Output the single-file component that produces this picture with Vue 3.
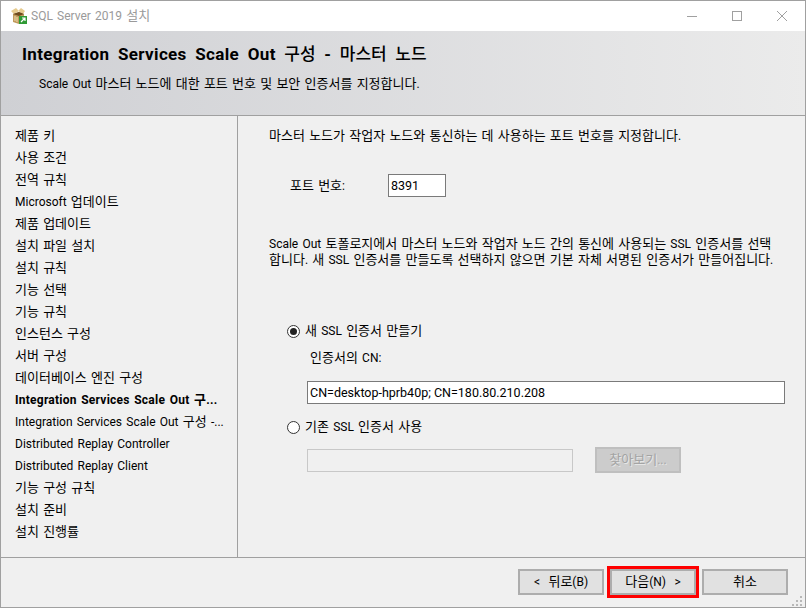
<script setup>
import { h } from 'vue'
const steps = ['제품 키','사용 조건','전역 규칙','Microsoft 업데이트','제품 업데이트','설치 파일 설치','설치 규칙','기능 선택','기능 규칙','인스턴스 구성','서버 구성','데이터베이스 엔진 구성','Integration Services Scale Out 구...','Integration Services Scale Out 구성 -...','Distributed Replay Controller','Distributed Replay Client','기능 구성 규칙','설치 준비','설치 진행률']
const T = (props) => props.t.split(/([가-힣]+)/).filter(Boolean).map((s) => /[가-힣]/.test(s) ? h('span', { class: 'ko' }, s) : s)
T.props = ['t']
</script>

<template>
  <div class="win">
    <div class="titlebar">
      <svg class="appicon" width="18" height="18" viewBox="0 0 18 18">
        <path d="M3 7 L9 5 L14 7 L14 15 L9 17 L3 15 Z" fill="#c09a5c"/>
        <path d="M1 4 L6 1 L9 4 L4 7 Z M15 4 L11 1 L8 4 L13 7 Z" fill="#e6cb8e"/>
        <path d="M3 7 L9 9 L14 7 L9 5 Z" fill="#6e4a1c"/>
        <path d="M5 9 L5 14 M7 10 L7 15" stroke="#f0dcb0" stroke-width="1"/>
        <rect x="9" y="9" width="8" height="8" fill="#2f9a35"/>
        <path d="M11 15 L15 11 M12 11 H15 V14" stroke="#fff" stroke-width="1.2" fill="none"/>
      </svg>
      <span class="wintitle"><T t="SQL Server 2019 설치" /></span>
      <div class="controls">
        <svg width="10" height="10" viewBox="0 0 10 10"><path d="M0 5.5H10" stroke="#a0a0a0"/></svg>
        <svg width="10" height="10" viewBox="0 0 10 10"><rect x=".5" y=".5" width="9" height="9" fill="none" stroke="#a0a0a0"/></svg>
        <svg width="10" height="10" viewBox="0 0 10 10"><path d="M0 0L10 10M10 0L0 10" stroke="#a0a0a0"/></svg>
      </div>
    </div>
    <header class="banner">
      <h1><T t="Integration Services Scale Out 구성 - 마스터 노드" /></h1>
      <p><T t="Scale Out 마스터 노드에 대한 포트 번호 및 보안 인증서를 지정합니다." /></p>
    </header>
    <div class="main">
      <nav class="side">
        <div v-for="(s,i) in steps" :key="s" class="step" :class="{cur:i===12}"><T :t="s" /></div>
      </nav>
      <section class="pane">
        <p class="intro"><T t="마스터 노드가 작업자 노드와 통신하는 데 사용하는 포트 번호를 지정합니다." /></p>
        <div class="port">
          <label><T t="포트 번호:" /></label>
          <div class="input portinput">8391</div>
        </div>
        <p class="desc"><T t="Scale Out 토폴로지에서 마스터 노드와 작업자 노드 간의 통신에 사용되는 SSL 인증서를 선택" /><br><T t="합니다. 새 SSL 인증서를 만들도록 선택하지 않으면 기본 자체 서명된 인증서가 만들어집니다." /></p>
        <div class="radio r1"><span class="dot on"></span><span><T t="새 SSL 인증서 만들기" /></span></div>
        <div class="cnlabel"><T t="인증서의 CN:" /></div>
        <div class="input cn">CN=desktop-hprb40p; CN=180.80.210.208</div>
        <div class="radio r2"><span class="dot"></span><span><T t="기존 SSL 인증서 사용" /></span></div>
        <div class="browse">
          <div class="disinput"></div>
          <div class="disbtn"><T t="찾아보기..." /></div>
        </div>
      </section>
    </div>
    <footer class="foot">
      <div class="btn"><T t="<  뒤로(B)" /></div>
      <div class="btn next"><T t="다음(N)  >" /></div>
      <div class="btn cancel"><T t="취소" /></div>
      <svg class="grip" width="12" height="12" viewBox="0 0 12 12" fill="#b8b8b8"><rect x="8" y="2" width="2" height="2"/><rect x="4" y="6" width="2" height="2"/><rect x="8" y="6" width="2" height="2"/><rect x="0" y="10" width="2" height="2"/><rect x="4" y="10" width="2" height="2"/><rect x="8" y="10" width="2" height="2"/></svg>
    </footer>
  </div>
</template>

<style>
html, body { margin: 0; padding: 0; }
.ko { font-size: 13px; }
</style>

<style scoped>
.win { width: 806px; height: 608px; box-sizing: border-box; border: 1px solid #a0a0a0; background: #f0f0f0; display: flex; flex-direction: column; font: 12px/16px Roboto, "Noto Sans CJK KR", sans-serif; word-spacing: 1.25px; color: #000; overflow: hidden; position: relative; }
.titlebar { height: 30px; flex: none; background: #fff; display: flex; align-items: center; padding-left: 9px; }
.appicon { flex: none; }
.wintitle { margin-left: 3px; color: #9a9a9a; }
.controls { margin-left: auto; display: flex; gap: 35px; padding-right: 18px; align-items: center; }
.banner { height: 85px; flex: none; box-sizing: border-box; background: linear-gradient(90deg, #cfd0d4, #ebebeb); border-bottom: 1px solid #a0a0a0; padding: 12px 0 0 21px; }
.banner h1 { margin: 0; font-size: 17px; line-height: 22px; font-weight: 700; letter-spacing: .35px; word-spacing: 4px; }
.banner h1 :deep(.ko) { font-size: 17px; font-weight: 500; letter-spacing: 0; }
.banner p { margin: 11px 0 0 17px; }
.main { flex: 1; display: flex; min-height: 0; }
.side { width: 237px; flex: none; box-sizing: border-box; border-right: 1px solid #a0a0a0; padding: 9px 0 0 14px; }
.step { height: 22px; line-height: 22px; white-space: nowrap; }
.cur { font-weight: 700; letter-spacing: .25px; }
.pane { flex: 1; padding: 12px 20px 0 31px; }
.pane p { margin: 0; }
.port { display: flex; align-items: center; margin: 30px 0 0 21px; }
.port label { width: 98px; }
.input { box-sizing: border-box; border: 1px solid #7a7a7a; background: #fff; height: 23px; line-height: 21px; padding-left: 2px; font-size: 12.5px; word-spacing: 0; }
.portinput { width: 58px; }
.desc { margin-top: 39px !important; line-height: 15px; }
.radio { display: flex; align-items: center; gap: 5px; margin-left: 18px; }
.r1 { margin-top: 55px; }
.r2 { margin-top: 15px; }
.dot { width: 13px; height: 13px; box-sizing: border-box; border: 1px solid #333; border-radius: 50%; background: #fff; position: relative; flex: none; }
.dot.on::after { content: ""; position: absolute; inset: 2px; background: #222; border-radius: 50%; }
.cnlabel { margin: 11px 0 0 41px; }
.cn { margin: 15px 0 0 38px; width: 478px; }
.browse { display: flex; align-items: center; gap: 22px; margin: 12px 0 0 38px; }
.disinput { width: 266px; height: 23px; box-sizing: border-box; border: 1px solid #c8c8c8; background: #f0f0f0; }
.disbtn { width: 86px; height: 26px; box-sizing: border-box; border: 2px solid #bfbfbf; background: #cccccc; color: #a4a4a4; text-align: center; line-height: 22px; text-shadow: 1px 1px 0 #e6e6e6; }
.foot { height: 50px; flex: none; box-sizing: border-box; border-top: 1px solid #a0a0a0; display: flex; justify-content: flex-end; align-items: flex-start; gap: 6px; padding: 11px 17px 0 0; position: relative; }
.btn { width: 86px; height: 26px; box-sizing: border-box; border: 2px solid #adadad; background: #e1e1e1; text-align: center; line-height: 22px; white-space: pre; }
.next { outline: 3px solid #f00; outline-offset: 0; }
.grip { position: absolute; right: 1px; bottom: 1px; }
</style>
